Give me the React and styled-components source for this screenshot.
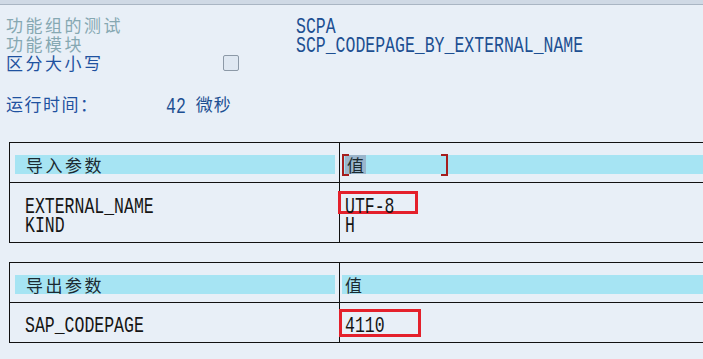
import React from "react";
import styled, { createGlobalStyle } from "styled-components";

const CJK = `"Noto Sans CJK SC", "Noto Sans", sans-serif`;
const MONO = `"Liberation Mono", "Noto Sans CJK SC", monospace`;

const GlobalStyle = createGlobalStyle`
  html, body {
    margin: 0;
    padding: 0;
    background: #e8eff7;
    overflow: hidden;
  }
`;

const Screen = styled.div`
  width: 703px;
  height: 359px;
  background: #e8eff7;
  overflow: hidden;
`;

const TopStrip = styled.div`
  height: 4px;
  background: #cfd9e5;
  border-bottom: 1px solid #a9b5c3;
`;

const InfoGrid = styled.div`
  display: grid;
  grid-template-columns: 217px 73px 1fr;
  grid-auto-rows: 19px;
  padding: 10px 0 0 6px;
`;

const Label = styled.div`
  font-family: ${CJK};
  font-size: 17px;
  letter-spacing: 2.5px;
  line-height: 19px;
  white-space: nowrap;
  color: ${({ $muted }) => ($muted ? "#86a8b2" : "#1f52a0")};
`;

// SAP GUI draws ASCII in a tall, narrow fixed-pitch face
const Mono = styled.span`
  position: relative;
  z-index: 1;
  display: inline-block;
  font-family: ${MONO};
  font-size: 16.5px;
  line-height: 19px;
  transform: translateY(1.5px) scaleY(1.3);
  transform-origin: 50% 73%;
  white-space: pre;
`;

const Value = styled.div`
  height: 19px;
  padding-top: ${({ $drop }) => $drop || 0}px;
  line-height: 19px;
  color: #1d4f92;
  white-space: nowrap;
`;

const Checkbox = styled.span`
  display: block;
  width: 16px;
  height: 16px;
  margin-top: 2px;
  box-sizing: border-box;
  border: 1px solid #8c99a7;
  border-radius: 2px;
  background: #dfe8f2;
`;

const RuntimeRow = styled.div`
  display: flex;
  align-items: center;
  height: 19px;
  margin-top: 22px;
  padding-left: 6px;
`;

const RuntimeLabel = styled(Label)`
  width: 160px;
  letter-spacing: 1.5px;
  color: #1f52a0;
`;

const Micro = styled.span`
  font-family: ${CJK};
  font-size: 17px;
  letter-spacing: 1px;
`;

const ParamTable = styled.div`
  margin: ${({ $top }) => $top}px 0 0 9px;
  width: 760px;
  border: 1px solid #111;
  display: grid;
  grid-template-columns: 329px 1fr;
`;

const HeadCell = styled.div`
  padding: ${({ $first }) => ($first ? "12px 4px 8px 5px" : "12px 0 8px 2px")};
  border-bottom: 1px solid #111;
  border-left: ${({ $first }) => ($first ? "none" : "1px solid #111")};
`;

const Band = styled.div`
  display: flex;
  align-items: center;
  height: 19px;
  padding-left: ${({ $inset }) => $inset}px;
  background: #a6e4f3;
  font-family: ${CJK};
  font-size: 17px;
  letter-spacing: 2.5px;
  color: #1b2a31;
  white-space: nowrap;
`;

const FocusFrame = styled.span`
  position: relative;
  flex: none;
  display: flex;
  align-items: center;
  width: 106px;
  height: 22px;
  padding-left: 3px;
  box-sizing: border-box;

  &::before,
  &::after {
    content: "";
    position: absolute;
    top: 0;
    bottom: 0;
    width: 5px;
    border: 2px solid #a51d1d;
  }
  &::before {
    left: 0;
    border-right: none;
  }
  &::after {
    right: 0;
    border-left: none;
  }
`;

const Selected = styled.span`
  display: flex;
  align-items: center;
  justify-content: center;
  width: 21px;
  height: 19px;
  background: #9ab6cc;
  letter-spacing: 0;
`;

const BodyCell = styled.div`
  padding: ${({ $first, $pad }) => ($first ? `${$pad}px 0 8px 15px` : `${$pad}px 0 8px 5px`)};
  border-left: ${({ $first }) => ($first ? "none" : "1px solid #111")};
`;

const Line = styled.div`
  height: 19px;
  line-height: 19px;
  color: #151515;
  white-space: nowrap;
`;

const Marked = styled.span`
  position: relative;
  display: inline-block;
  height: 19px;

  &::after {
    content: "";
    position: absolute;
    left: ${({ $box }) => $box.left}px;
    top: ${({ $box }) => $box.top}px;
    width: ${({ $box }) => $box.width}px;
    height: ${({ $box }) => $box.height}px;
    box-sizing: border-box;
    border: 3px solid #e4202b;
  }
`;

const importParams = [
  { name: "EXTERNAL_NAME", value: "UTF-8", box: { left: -7, top: -5, width: 80, height: 23 } },
  { name: "KIND", value: "H" },
];

const exportParams = [
  { name: "SAP_CODEPAGE", value: "4110", box: { left: -6, top: -6, width: 82, height: 28 } },
];

function Params({ title, rows, top, focused, pad }) {
  return (
    <ParamTable $top={top}>
      <HeadCell $first>
        <Band $inset={11}>{title}</Band>
      </HeadCell>
      <HeadCell>
        {focused ? (
          <Band $inset={0}>
            <FocusFrame>
              <Selected>值</Selected>
            </FocusFrame>
          </Band>
        ) : (
          <Band $inset={3}>值</Band>
        )}
      </HeadCell>
      <BodyCell $first $pad={pad}>
        {rows.map((r) => (
          <Line key={r.name}>
            <Mono>{r.name}</Mono>
          </Line>
        ))}
      </BodyCell>
      <BodyCell $pad={pad}>
        {rows.map((r) => (
          <Line key={r.name}>
            {r.box ? (
              <Marked $box={r.box}>
                <Mono>{r.value}</Mono>
              </Marked>
            ) : (
              <Mono>{r.value}</Mono>
            )}
          </Line>
        ))}
      </BodyCell>
    </ParamTable>
  );
}

export default function App() {
  return (
    <Screen>
      <GlobalStyle />
      <TopStrip />
      <InfoGrid>
        <Label $muted>功能组的测试</Label>
        <span />
        <Value $drop={1}>
          <Mono>SCPA</Mono>
        </Value>
        <Label $muted>功能模块</Label>
        <span />
        <Value $drop={1}>
          <Mono>SCP_CODEPAGE_BY_EXTERNAL_NAME</Mono>
        </Value>
        <Label>区分大小写</Label>
        <Checkbox />
        <span />
      </InfoGrid>
      <RuntimeRow>
        <RuntimeLabel>运行时间：</RuntimeLabel>
        <Value>
          <Mono>42 </Mono>
          <Micro>微秒</Micro>
        </Value>
      </RuntimeRow>
      <Params title="导入参数" rows={importParams} top={29} pad={13} focused />
      <Params title="导出参数" rows={exportParams} top={19} pad={12} />
    </Screen>
  );
}
